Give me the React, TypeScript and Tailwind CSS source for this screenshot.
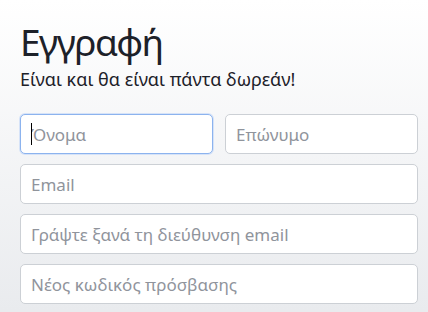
const font = { fontFamily: '"Noto Sans", "Open Sans", sans-serif' };

function Field({ placeholder, focused = false }: { placeholder: string; focused?: boolean }) {
  return (
    <div className="relative flex-1">
      <input
        placeholder={placeholder}
        style={font}
        className={
          focused
            ? "h-10 w-full rounded-[5px] border border-[#8cb3ee] bg-white px-[10px] text-[17px] text-[#1d2129] outline-none ring-1 ring-[#d6e3f8] placeholder:text-[#90949c]"
            : "h-10 w-full rounded-[5px] border border-[#ccd0d5] bg-white px-[10px] text-[17px] text-[#1d2129] outline-none placeholder:text-[#90949c]"
        }
      />
      {focused && <span className="absolute left-[11px] top-[9px] h-[22px] w-px bg-black" />}
    </div>
  );
}

export default function App() {
  return (
    <div
      style={font}
      className="h-[312px] w-[428px] overflow-hidden bg-gradient-to-b from-white to-[#e9ebee] px-5 pt-[20px]"
    >
      <h1 className="text-[37px] leading-[44px] tracking-[-1.5px] text-[#1d2129]">Εγγραφή</h1>
      <p className="mt-[3px] text-[18px] leading-[24px] text-[#1d2129]">Είναι και θα είναι πάντα δωρεάν!</p>
      <div className="mt-[23px] flex w-[398px] flex-col gap-[10px]">
        <div className="flex gap-3">
          <Field placeholder="Όνομα" focused />
          <Field placeholder="Επώνυμο" />
        </div>
        <Field placeholder="Email" />
        <Field placeholder="Γράψτε ξανά τη διεύθυνση email" />
        <Field placeholder="Νέος κωδικός πρόσβασης" />
      </div>
    </div>
  );
}
